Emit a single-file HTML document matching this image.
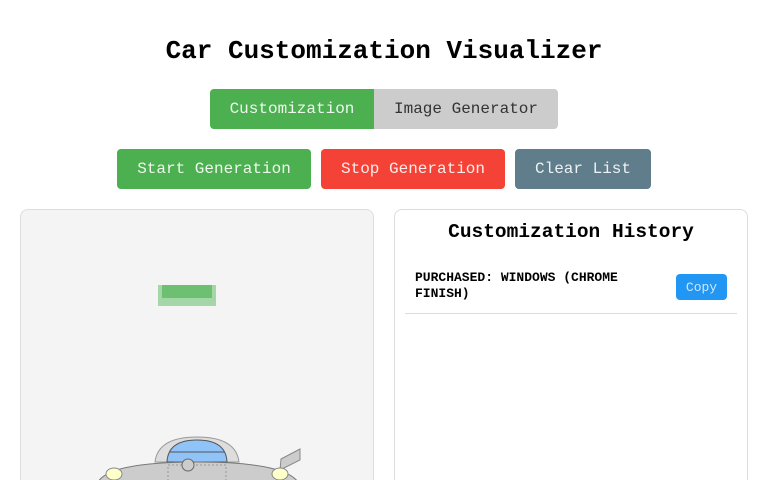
<!DOCTYPE html>
<html style="height:480px;overflow:hidden"><head><style>
body{margin:0;width:768px;height:480px;overflow:hidden;background:#fff;font-family:"Liberation Mono","Courier New",monospace;position:relative}
.a{position:absolute;box-sizing:border-box}
h1{position:absolute;top:36px;left:0;width:768px;margin:0;text-align:center;font-size:26px;font-weight:bold;color:#000}
.b{position:absolute;display:flex;align-items:center;justify-content:center;color:#fff;font-size:16px;box-sizing:border-box}
</style></head><body>
<h1>Car Customization Visualizer</h1>
<div class="b" style="left:210px;top:89px;width:164px;height:40px;background:#4caf50;border-radius:4px 0 0 4px;color:#eef8ee">Customization</div>
<div class="b" style="left:374px;top:89px;width:184px;height:40px;background:#ccc;color:#333;border-radius:0 4px 4px 0">Image Generator</div>
<div class="b" style="left:117px;top:149px;width:194px;height:40px;background:#4caf50;border-radius:4px;color:#eef8ee">Start Generation</div>
<div class="b" style="left:321px;top:149px;width:184px;height:40px;background:#f44336;border-radius:4px;color:#fdeceb">Stop Generation</div>
<div class="b" style="left:515px;top:149px;width:136px;height:40px;background:#607d8b;border-radius:4px;color:#eef2f4">Clear List</div>
<div class="a" style="left:20px;top:209px;width:354px;height:290px;background:#f4f4f4;border:1px solid #ddd;border-radius:8px"></div>
<div class="a" style="left:394px;top:209px;width:354px;height:290px;background:#fff;border:1px solid #ddd;border-radius:8px">
<div style="position:absolute;top:11px;left:0;width:100%;text-align:center;font-size:19.5px;font-weight:bold">Customization History</div>
<div style="position:absolute;top:60px;left:20px;font-size:13px;font-weight:bold;line-height:16px;width:240px">PURCHASED: WINDOWS (CHROME FINISH)</div>
<div class="b" style="left:281px;top:64px;width:51px;height:26px;background:#2196f3;border-radius:4px;font-size:13px;color:#cfe6fb">Copy</div>
<div style="position:absolute;left:10px;right:10px;top:103px;border-top:1px solid #ddd"></div>
</div>
<svg class="a" style="left:0;top:0" width="768" height="480">
<rect x="158" y="285" width="58" height="21" fill="#a5d6a7"/>
<rect x="162" y="285" width="50" height="13" fill="#6dbf71"/>
<path d="M155 462 Q158 437 197 437 Q236 437 239 462 Z" fill="#ddd" stroke="#999"/>
<path d="M167 462 Q168 440 197 440 Q226 440 227 462 Z" fill="#90c4f9" stroke="#555"/>
<line x1="170" y1="452" x2="225" y2="452" stroke="#555"/>
<path d="M280 470 L281 459 L300 449 L300 460 Z" fill="#ccc" stroke="#888"/>
<path d="M98 482 Q110 462 197 462 Q284 462 298 482 Z" fill="#ccc" stroke="#777"/>
<rect x="168" y="465" width="58" height="20" fill="none" stroke="#999" stroke-dasharray="2 2"/>
<circle cx="188" cy="465" r="6" fill="#ccc" stroke="#666"/>
<ellipse cx="114" cy="474" rx="8" ry="6" fill="#ffffcc" stroke="#888"/>
<ellipse cx="280" cy="474" rx="8" ry="6" fill="#ffffcc" stroke="#888"/>
</svg>
</body></html>
